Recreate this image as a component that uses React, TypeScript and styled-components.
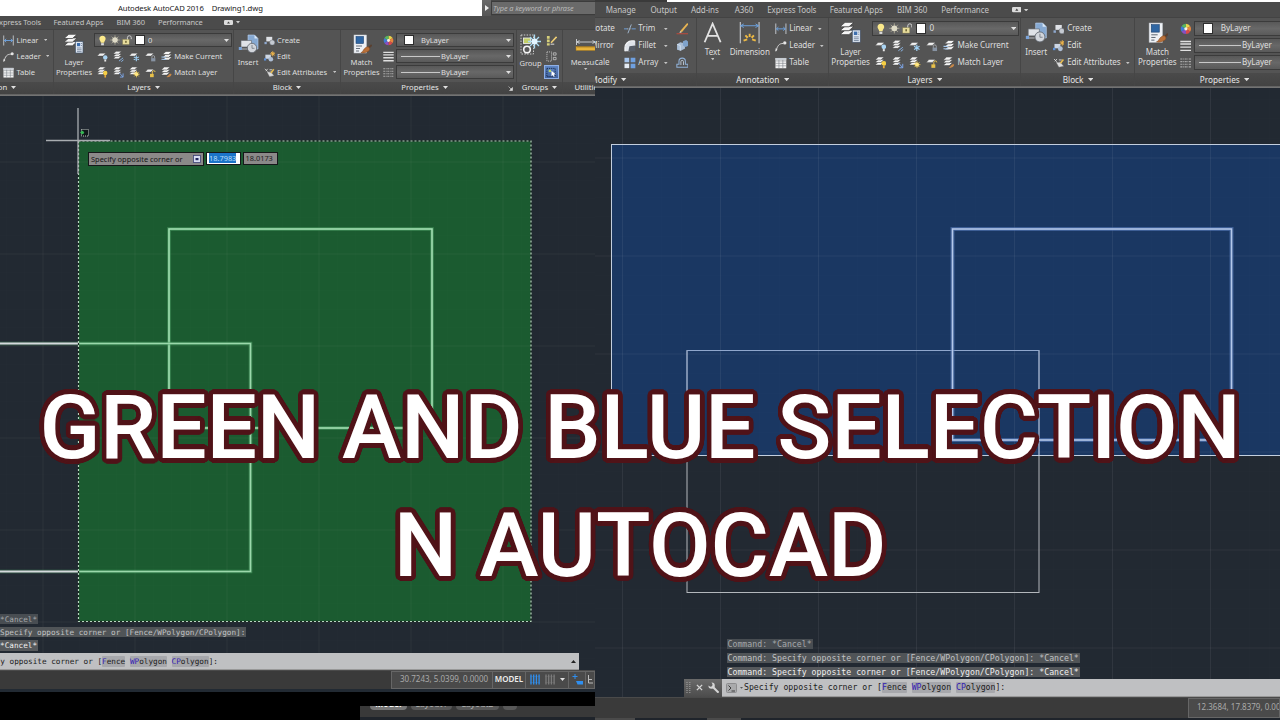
import React from 'react';
import styled, { createGlobalStyle } from 'styled-components';

const UI = '"Noto Sans", "Open Sans", sans-serif';
const MONO = '"DejaVu Sans Mono", "Liberation Mono", monospace';

const GlobalStyle = createGlobalStyle`
  *, *::before, *::after { box-sizing: border-box; }
  html, body { margin: 0; padding: 0; background: #000; }
  body { width: 1280px; height: 720px; overflow: hidden; font-family: ${UI}; }
  svg { display: block; flex: none; }
`;

/* ---------- page frame ---------- */

const Screen = styled.main`
  position: relative;
  display: grid;
  grid-template-columns: 595px 685px;
  width: 1280px;
  height: 720px;
  overflow: hidden;
  background: #000;
`;

const Column = styled.section`
  display: flex;
  flex-direction: column;
  min-width: 0;
  height: 720px;
  overflow: hidden;
`;

const Headline = styled.h1`
  position: absolute;
  top: 369px;
  left: 0;
  width: 1280px;
  margin: 0;
  text-align: center;
  font: 500 89.5px/118px Roboto, sans-serif;
  color: #fff;
  white-space: nowrap;
  text-shadow: ${Array.from({ length: 32 }, (_, i) => {
    const a = (i / 32) * Math.PI * 2;
    return `${(Math.cos(a) * 4.6).toFixed(2)}px ${(Math.sin(a) * 4.6).toFixed(2)}px 0.6px #501318`;
  }).join(', ')};
`;

const HeadlineRow = styled.span<{ $track: number }>`
  display: block;
  letter-spacing: ${(p) => p.$track}px;
`;

/* ---------- title bar and tabs ---------- */

const TitleBar = styled.header`
  display: flex;
  flex: none;
  height: 16px;
  background: #fff;
`;

const TitleText = styled.div`
  display: flex;
  flex: 1;
  align-items: center;
  gap: 8px;
  padding-left: 118px;
  font-size: 7.7px;
  line-height: 15px;
  color: #222;
  letter-spacing: -0.11px;
  white-space: nowrap;
`;

const SearchArrow = styled.div`
  display: flex;
  align-items: center;
  justify-content: center;
  width: 9px;
  background: linear-gradient(#6b6b6b, #555);
`;

const SearchField = styled.div`
  width: 104px;
  margin: 1px 0 1px 0;
  padding-left: 1px;
  border: 1px solid #3c3c3c;
  border-right: 0;
  background: #6a6a6a;
  font: italic 7.4px/12px ${UI};
  letter-spacing: -0.12px;
  color: #b9b9b9;
  white-space: nowrap;
`;

const SearchWrap = styled.div`
  display: flex;
  background: #484848;
`;

const TopSliver = styled.div`
  flex: none;
  height: 3px;
  background: linear-gradient(90deg, #3a3a3a 72px, #fff 72px) 0 0 / 100% 2px no-repeat #4b4b4b;
`;

const RibbonArea = styled.div<{ $zoom: number; $h: number }>`
  zoom: ${(p) => p.$zoom};
  flex: none;
  height: ${(p) => p.$h}px;
  background: #4a4a4a;
  overflow: hidden;
`;

const Tabs = styled.nav<{ $start: number }>`
  display: flex;
  align-items: center;
  height: 14px;
  padding-left: ${(p) => Math.max(p.$start, 0)}px;
  margin-left: ${(p) => Math.min(p.$start, 0)}px;
  background: #4b4b4b;
  border-bottom: 1px solid #434343;
`;

const Tab = styled.span<{ $w: number }>`
  flex: none;
  width: ${(p) => p.$w}px;
  font-size: 7.5px;
  line-height: 13px;
  color: #c6c6c6;
  letter-spacing: -0.1px;
  white-space: nowrap;
`;

const TabToggle = styled.span`
  display: flex;
  align-items: center;
  gap: 3px;
  margin-left: 7px;
`;

/* ---------- ribbon ---------- */

const Panels = styled.div<{ $start: number }>`
  display: flex;
  height: 64px;
  margin-left: ${(p) => p.$start}px;
`;

const Panel = styled.section<{ $w: number }>`
  display: flex;
  flex: none;
  flex-direction: column;
  width: ${(p) => p.$w}px;
  border-left: 1px solid #464646;
  box-shadow: inset 1px 0 0 #585858;
`;

const PanelBody = styled.div<{ $pad?: number; $end?: boolean }>`
  display: flex;
  height: 51.5px;
  padding-left: ${(p) => p.$pad ?? 1}px;
  justify-content: ${(p) => (p.$end ? 'flex-end' : 'flex-start')};
  background: #545454;
`;

const PanelFoot = styled.footer<{ $corner?: boolean }>`
  position: relative;
  display: flex;
  height: 12.5px;
  align-items: center;
  justify-content: center;
  gap: 4px;
  padding-right: ${(p) => (p.$corner ? 8 : 0)}px;
  background: linear-gradient(#4a4a4a, #434343);
  font-size: 7.7px;
  line-height: 11px;
  color: #e6e6e6;
  white-space: nowrap;
`;

const CornerMark = styled.span`
  position: absolute;
  right: 3px;
  bottom: 3px;
`;

const RibbonEdge = styled.div`
  height: 2px;
  background: linear-gradient(#5c5c5c, #7a7a7a);
`;

const BigButton = styled.div<{ $w: number }>`
  display: flex;
  flex: none;
  flex-direction: column;
  align-items: center;
  width: ${(p) => p.$w}px;
  padding-top: 4px;
`;

const BigLabel = styled.span`
  margin-top: 3px;
  font-size: 7.6px;
  line-height: 10px;
  color: #dedede;
  letter-spacing: -0.08px;
  text-align: center;
  white-space: pre;
`;

const BigCaret = styled.span`
  margin-top: 1px;
`;

const Stack = styled.div<{ $w?: number }>`
  display: flex;
  flex: none;
  flex-direction: column;
  width: ${(p) => (p.$w ? `${p.$w}px` : 'auto')};
  padding-top: 2px;
`;

const Row = styled.div<{ $indent?: number }>`
  display: flex;
  height: 16px;
  align-items: center;
  padding-left: ${(p) => p.$indent ?? 0}px;
`;

const Cell = styled.span<{ $w: number; $active?: boolean }>`
  display: flex;
  flex: none;
  width: ${(p) => p.$w}px;
  height: 14px;
  align-items: center;
  justify-content: center;
  background: ${(p) => (p.$active ? 'linear-gradient(#5f86c4, #41639f)' : 'none')};
  border: ${(p) => (p.$active ? '1px solid #8fb0e6' : '0')};
`;

const Label = styled.span<{ $w?: number }>`
  flex: none;
  width: ${(p) => (p.$w ? `${p.$w}px` : 'auto')};
  font-size: 7.6px;
  line-height: 12px;
  color: #dedede;
  letter-spacing: -0.06px;
  white-space: nowrap;
`;

const Combo = styled.div<{ $w: number }>`
  display: flex;
  align-items: center;
  width: ${(p) => p.$w}px;
  height: 14.5px;
  padding: 0 2px 0 2px;
  border: 1px solid #3b3b3b;
  background: linear-gradient(#585858, #686868 50%, #5a5a5a);
`;

const ComboEnd = styled.span`
  margin-left: auto;
`;

const Swatch = styled.span<{ $l: number; $r: number }>`
  width: 10px;
  height: 10px;
  margin: 0 ${(p) => p.$r}px 0 ${(p) => p.$l}px;
  background: #fff;
  border: 0.5px solid #2e2e2e;
`;

const LineSample = styled.span`
  width: 39px;
  height: 1px;
  margin: 0 1px 0 2px;
  background: #c9c9c9;
`;

/* ---------- icons ---------- */

const Caret = ({ w = 5, color = '#e0e0e0', up = false }: { w?: number; color?: string; up?: boolean }) => (
  <svg width={w} height={w * 0.6} viewBox="0 0 10 6">
    <path d={up ? 'M0 6h10L5 0z' : 'M0 0h10L5 6z'} fill={color} />
  </svg>
);

const sheets = (x: number, y: number, s = 1) => (
  <g transform={`translate(${x} ${y}) scale(${s})`}>
    {[7, 3.5, 0].map((d) => (
      <path key={d} d={`M4.500 ${d}h8l-4.500 4h-8z`} fill="#f5f5f5" stroke="#3d3d3d" strokeWidth=".7" />
    ))}
  </g>
);

const LayerPropsIcon = () => (
  <svg width="20" height="20" viewBox="0 0 20 20">
    {sheets(0, 0.3, 1.05)}
    <rect x="11.5" y="7.5" width="7.500" height="11.500" fill="#dfe7f2" stroke="#3f5068" strokeWidth=".6" />
    <rect x="13" y="9" width="3.200" height="3.200" fill="#3e6fae" />
    <path d="M13 14h4.600M13 15.700h4.600M13 17.400h4.600M17 9.500h1M17 11.500h1" stroke="#5b6e88" strokeWidth=".7" />
  </svg>
);

const InsertIcon = () => (
  <svg width="21" height="20" viewBox="0 0 21 20">
    <path d="M10 1h6.500L20 4.500V15H10z" fill="#86a9d2" stroke="#b9d2ee" strokeWidth=".6" />
    <path d="M16.500 1v3.500H20z" fill="#d9e8f8" />
    <path d="M3 6.500h10.500v6.500H3z" fill="#dfe2e7" stroke="#60656d" strokeWidth=".6" />
    <circle cx="14" cy="14" r="4.700" fill="#d2d6dc" stroke="#5f656d" strokeWidth=".8" />
    <path d="M14 11v3.300h2.500" stroke="#70767f" strokeWidth=".8" fill="none" />
    <path d="M3 13v2h6" stroke="#c9ced6" strokeWidth=".8" fill="none" />
    <rect x=".8" y="13" width="3" height="3" fill="#7ba4da" />
  </svg>
);

const MatchIcon = () => (
  <svg width="20" height="20" viewBox="0 0 20 20">
    <rect x="2" y="1" width="12.500" height="18" fill="#eef1f5" stroke="#c5cad1" strokeWidth=".5" />
    <rect x="4" y="2.500" width="7.500" height="7" fill="#2f66a3" stroke="#1d4472" strokeWidth=".6" />
    <path d="M4 12h6M4 14.500h4M4 17h3" stroke="#57616e" strokeWidth=".9" />
    <path d="M19.700 11l-3.700 3.500" stroke="#5a4030" strokeWidth="1.900" />
    <path d="M17 13.300c1.300 1.400.8 3.200-.9 4.100-2 1.100-4.900 2.100-7.200 1.200 1.900-.4 2-2.200 3.300-3.600 1.300-1.500 3.500-2.900 4.800-1.700z" fill="#b8703a" stroke="#7c451c" strokeWidth=".5" />
  </svg>
);

const GroupIcon = () => (
  <svg width="21" height="21" viewBox="0 0 21 21">
    <rect x="1" y="1" width="12.500" height="19" fill="none" stroke="#cfcfcf" strokeWidth="1" strokeDasharray="1.500 1.300" />
    <rect x="3.500" y="4" width="7" height="5.500" fill="#c3cf68" stroke="#f2f2f2" strokeWidth=".8" />
    <circle cx="7" cy="15.500" r="3.300" fill="#5a5a5a" stroke="#f5f5f5" strokeWidth="1.600" />
    <path d="M14.500.5v14M8 7.500h13M10 3l9 9M19 3l-9 9" stroke="#a9dcf5" strokeWidth="1.300" />
    <circle cx="14.500" cy="7.500" r="3" fill="#e4f5ff" />
  </svg>
);

const MeasureIcon = () => (
  <svg width="22" height="20" viewBox="0 0 22 20">
    <path d="M1.500 5v6M20.500 5v6M2 8h18M4.500 6.500L2 8l2.500 1.500M17.500 6.500L20 8l-2.500 1.500" stroke="#dfe3e8" strokeWidth=".8" fill="none" />
    <rect x="1" y="12.500" width="20" height="4" fill="#e9b43c" stroke="#a1741a" strokeWidth=".5" />
    <path d="M3 12.500v1.600M5 12.500v1.600M7 12.500v1.600M9 12.500v1.600M11 12.500v1.600M13 12.500v1.600M15 12.500v1.600M17 12.500v1.600M19 12.500v1.600" stroke="#7c5608" strokeWidth=".5" />
  </svg>
);

const LetterAIcon = () => (
  <svg width="18" height="20" viewBox="0 0 18 20">
    <path d="M1.500 19L9 1.600 16.500 19M4.200 13h9.600" stroke="#e3e3e3" strokeWidth="1.700" fill="none" />
  </svg>
);

const DimensionIcon = () => (
  <svg width="20" height="20" viewBox="0 0 20 20">
    <path d="M1.200 0v20M18.800 0v20" stroke="#d9dde2" strokeWidth=".9" />
    <path d="M1.500 3.500h17M4.500 1.800L1.600 3.500l2.900 1.700M15.500 1.800l2.900 1.700-2.900 1.700" stroke="#6da3e0" strokeWidth=".9" fill="none" />
    <path d="M4.300 17.500l3.400-1.200M15.700 17.500l-3.400-1.200M6 12.500l2.200 2.300M14 12.500l-2.200 2.300M10 11v3" stroke="#edb944" strokeWidth="1.800" />
  </svg>
);

type IconName =
  | 'linear' | 'leader' | 'table' | 'bulb' | 'sun' | 'lock'
  | 'lyOff' | 'lyIso' | 'lyFreeze' | 'lyLock' | 'lyCurrent'
  | 'lyOn' | 'lyUniso' | 'lyThaw' | 'lyUnlock' | 'lyMatch'
  | 'create' | 'edit' | 'attrs' | 'wheel' | 'weights' | 'types'
  | 'gEdit' | 'gBox' | 'gPick' | 'trim' | 'fillet' | 'array'
  | 'pencil' | 'explode' | 'offset';

const mini = (
  <path d="M3 2.500h6.500L6.500 5.500H.3z" fill="#f0f0f0" stroke="#444" strokeWidth=".4" />
);

const ART: Record<IconName, React.ReactNode> = {
  linear: (
    <>
      <path d="M.8.500v11M11.200.500v11" stroke="#cdd2d8" strokeWidth=".9" />
      <path d="M1.300 6h9.400M3.500 4.200L1.500 6l2 1.800M8.500 4.200l2 1.800-2 1.800" stroke="#6da3e0" strokeWidth="1" fill="none" />
    </>
  ),
  leader: (
    <>
      <path d="M1 11.500C2.500 6 4 3.500 8.500 3.500" stroke="#d6d6d6" strokeWidth="1" fill="none" />
      <path d="M.3 11.800l.4-3.300 1.900 1.200z" fill="#e6e6e6" />
      <circle cx="10" cy="3" r="1.700" fill="#e6e6e6" />
    </>
  ),
  table: (
    <>
      <rect x=".5" y="1" width="11" height="10.500" fill="#f4f4f4" />
      <path d="M.5 4h11M.5 6.500h11M.5 9h11M4 1.500v10M8 1.500v10" stroke="#7b8087" strokeWidth=".6" />
      <path d="M.5 1h11v2H.5z" fill="#c7ccd3" />
    </>
  ),
  bulb: (
    <>
      <path d="M6 .8c2.300 0 3.400 1.500 3.400 3.200 0 1.600-1.500 2.600-1.700 4.400H4.300C4.100 6.600 2.600 5.600 2.600 4 2.600 2.300 3.700.8 6 .8z" fill="#fbe98b" />
      <path d="M4.500 8.900h3v2.300h-3z" fill="#dadada" />
    </>
  ),
  sun: (
    <>
      <path d="M6 .3v11.400M.3 6h11.400M2 2l8 8M10 2l-8 8" stroke="#b7b29a" strokeWidth=".9" />
      <circle cx="6" cy="6" r="3.300" fill="#dedac6" />
    </>
  ),
  lock: (
    <>
      <path d="M6.500 6V3.200a2.300 2.300 0 0 1 4.600 0V5" stroke="#d6d6d6" strokeWidth="1.100" fill="none" />
      <rect x=".8" y="5.300" width="7.800" height="6" fill="#e7dc9c" stroke="#8b8044" strokeWidth=".4" />
      <rect x="3.800" y="7" width="1.800" height="2.400" fill="#6e6535" />
    </>
  ),
  lyOff: (
    <>
      {mini}
      <circle cx="9" cy="7" r="2.400" fill="#a9d3f2" />
      <path d="M8 9.300h2v2.200H8z" fill="#e8e8e8" />
    </>
  ),
  lyIso: (
    <>
      {sheets(0, 0.300, 0.75)}
      <path d="M6.500 11L11 7.500M9 11.600l2.500-2" stroke="#8db8e8" strokeWidth="1" />
    </>
  ),
  lyFreeze: (
    <>
      {mini}
      <path d="M8 4.800v6.400M5.200 6.400l5.600 3.200M10.800 6.400L5.200 9.600" stroke="#9fd0f4" strokeWidth="1.200" />
    </>
  ),
  lyLock: (
    <>
      {mini}
      <path d="M7.500 8V6.500a1.500 1.500 0 0 1 3 0V8" stroke="#b5b9bf" strokeWidth=".8" fill="none" />
      <rect x="6.700" y="7.800" width="4.600" height="3.500" fill="#8793a3" />
    </>
  ),
  lyCurrent: (
    <>
      {sheets(1.500, 0.500, 0.85)}
      <path d="M.5 6.500l5 .2M.5 9l5 .2" stroke="#a7c9ee" strokeWidth="1.100" />
    </>
  ),
  lyOn: (
    <>
      {sheets(0, 0, 0.75)}
      <circle cx="9" cy="6.500" r="2.400" fill="#f6cf45" />
      <path d="M8.100 8.800h1.800v2.700H8.100z" fill="#e8a93a" />
    </>
  ),
  lyUniso: (
    <>
      {sheets(0, 0, 0.75)}
      <path d="M7 6.500l4 4.500M11 7v4H7.500" stroke="#7ea6e8" strokeWidth="1" fill="none" />
    </>
  ),
  lyThaw: (
    <>
      {sheets(0, 0, 0.75)}
      <path d="M8.200 4.300v7M4.700 7.800h7M5.700 5.300l5 5M10.700 5.300l-5 5" stroke="#efc84a" strokeWidth=".9" />
      <circle cx="8.200" cy="7.800" r="2" fill="#ffe680" />
    </>
  ),
  lyUnlock: (
    <>
      {mini}
      <path d="M8 8V5.500a1.500 1.500 0 0 1 3 0" stroke="#e9c14a" strokeWidth="1" fill="none" />
      <rect x="5.500" y="7.500" width="4" height="3.600" fill="#e9c14a" />
    </>
  ),
  lyMatch: (
    <>
      {sheets(0, 0, 0.8)}
      <path d="M11.500 8c-.5 2.500-3 3.500-6 3 1.500-.4 1.700-1.400 2.700-2.400 1-1 2.400-1.600 3.300-.6z" fill="#c98848" />
    </>
  ),
  create: (
    <>
      <path d="M2.500 2h6.500v5H2.500z" fill="#dfe2e7" />
      <circle cx="9" cy="8.200" r="2.800" fill="#c5cad2" stroke="#60656d" strokeWidth=".5" />
      <path d="M.5 7.500h2.500V10H.5z" fill="#8fa9cf" />
    </>
  ),
  edit: (
    <>
      <path d="M1.500 4h6v4.500h-6z" fill="#ccd6e4" />
      <circle cx="7.500" cy="9" r="2.500" fill="#aebfd6" />
      <path d="M0 8h2.400v2.400H0z" fill="#5c92dd" />
      <path d="M9.500.3v5.400M6.800 3h5.400M7.700 1.100l3.600 3.800M11.300 1.100L7.700 4.900" stroke="#f0b64a" strokeWidth="1" />
    </>
  ),
  attrs: (
    <>
      <path d="M1 2l3 3M4 2L2 4.500M6 3h3M6 5.500h3" stroke="#dedede" strokeWidth=".9" />
      <path d="M3 5l3 5.500 5-1L8 6z" fill="#dcdcdc" stroke="#666" strokeWidth=".4" />
      <path d="M7 6l3-4 1.300 1-3 4z" fill="#e8bc4e" />
    </>
  ),
  wheel: (
    <>
      <path d="M6 6V.8A5.200 5.200 0 0 1 10.500 3.400z" fill="#e8d34a" />
      <path d="M6 6l4.500-2.600a5.200 5.200 0 0 1 0 5.200z" fill="#e8853f" />
      <path d="M6 6l4.500 2.600A5.200 5.200 0 0 1 6 11.200z" fill="#d94a4a" />
      <path d="M6 6v5.200a5.200 5.200 0 0 1-4.500-2.600z" fill="#8a4fc4" />
      <path d="M6 6L1.500 8.600a5.200 5.200 0 0 1 0-5.200z" fill="#3f7bd6" />
      <path d="M6 6L1.500 3.400A5.200 5.200 0 0 1 6 .8z" fill="#58b860" />
      <circle cx="6" cy="6" r="1.600" fill="#f5f0e4" />
    </>
  ),
  weights: <path d="M.3 1.500h11.400M.3 4.200h11.400M.3 7.300h11.400M.3 10.600h11.400" stroke="#e0e0e0" strokeWidth="1.500" />,
  types: <path d="M.3 2h11.400M.3 4.700h11.400M.3 7.400h11.400M.3 10.100h11.400" stroke="#a9a9a9" strokeWidth="1.100" strokeDasharray="2.200 .7 .8 .7" />,
  gEdit: (
    <>
      <path d="M1 1h3v3H1zM1 5h3v3H1zM1 9h3v2.500H1z" fill="#d6d07a" />
      <path d="M5.500 8.500L11.500 2" stroke="#f0cf75" strokeWidth="1.700" />
      <path d="M5 10h4" stroke="#ddd" strokeWidth="1.100" />
    </>
  ),
  gBox: (
    <>
      <rect x="1" y="1" width="5" height="10" fill="none" stroke="#cfcfcf" strokeWidth=".9" strokeDasharray="1.200 1" />
      <path d="M8 2h3v2.500H8zM8 7h3v2.500H8z" fill="none" stroke="#c4c4c4" strokeWidth=".9" />
    </>
  ),
  gPick: (
    <>
      <rect x="1" y="1.500" width="9" height="9" fill="none" stroke="#111d33" strokeWidth=".9" strokeDasharray="1.300 1" />
      <path d="M3 3h2.500v2.500H3z" fill="#b7d66b" />
      <path d="M6 4l4.500 4-2 .3 1 2.200-1 .5-1-2.300L6 10z" fill="#fff" />
    </>
  ),
  trim: (
    <>
      <path d="M0 6h3.500M8 6h4" stroke="#6e9fd8" strokeWidth="1" />
      <path d="M3 6h5" stroke="#bfc4ca" strokeWidth=".8" strokeDasharray="1 .7" />
      <path d="M7.500 1.500l-3.500 9" stroke="#9fb4cc" strokeWidth="1" />
    </>
  ),
  fillet: (
    <>
      <path d="M1 11.500V8a7 7 0 0 1 7-7h3.500v4.500L6 11.500z" fill="#dfe3e9" />
      <path d="M1 11.500V8a7 7 0 0 1 7-7h3" stroke="#f2f4f6" strokeWidth="1.300" fill="none" />
      <path d="M4.500 11.500l1-5 6-1v6z" fill="#565d67" />
    </>
  ),
  array: (
    <>
      <path d="M.5.800h4.800v4.600H.5z" fill="#a7c6ee" />
      <path d="M6.800.800h4.800v4.600H6.800zM6.800 6.800h4.800v4.600H6.800z" fill="#6fa0e0" />
      <path d="M.5 6.800h4.800v4.600H.5z" fill="#e3eaf3" />
    </>
  ),
  pencil: (
    <>
      <path d="M4 8.500L10.500 1l1.200 1L5.500 9.500z" fill="#e8b452" />
      <path d="M4 8.500l1.500 1-2.300.8z" fill="#f0e2c8" />
      <path d="M.5 11h11" stroke="#b84a3c" strokeWidth="1" />
    </>
  ),
  explode: (
    <>
      <path d="M1 5l3-2 4 1 .5 5-4 2L1 10z" fill="#a9bed6" />
      <path d="M6.500 2l3-1 2 1.500v4L9 7.500 6.500 6z" fill="#7fa3cc" />
      <path d="M1 5l3 1v5" stroke="#dde8f4" strokeWidth=".7" fill="none" />
    </>
  ),
  offset: (
    <>
      <path d="M.8 10.500h10.400V7.800H8.800V5a3 3 0 0 0-6 0v2.800h-2z" fill="none" stroke="#8fb0d6" strokeWidth="1" />
      <path d="M4.600 8.500V5.300a1.200 1.200 0 0 1 2.400 0v3.200" stroke="#c9d6e4" strokeWidth=".8" fill="none" />
    </>
  ),
};

const Glyph = ({ name, size = 11 }: { name: IconName; size?: number }) => (
  <svg width={size} height={size} viewBox="0 0 12 12">
    {ART[name]}
  </svg>
);

/* ---------- ribbon panels ---------- */

const Foot = ({ children, corner }: { children: string; corner?: boolean }) => (
  <PanelFoot $corner={corner}>
    {children}
    <Caret w={5} />
    {corner && (
      <CornerMark>
        <svg width="5" height="5" viewBox="0 0 5 5">
          <path d="M.5.5l2.500 2.500M4.500 1.500v3h-3z" fill="#ddd" stroke="#ddd" strokeWidth=".6" />
        </svg>
      </CornerMark>
    )}
  </PanelFoot>
);

const Tool = ({ icon, text, w, cell = 16, drop }: { icon?: IconName; text: string; w?: number; cell?: number; drop?: boolean }) => (
  <Row>
    {icon && (
      <Cell $w={cell}>
        <Glyph name={icon} />
      </Cell>
    )}
    <Label $w={w}>{text}</Label>
    {drop && <Caret w={3.4} color="#c4c4c4" />}
  </Row>
);

const ModifyPanel = () => (
  <Panel $w={165}>
    <PanelBody $end>
      <Stack $w={29}>
        <Tool text="Rotate" />
        <Tool text="Mirror" />
        <Tool text="Scale" />
      </Stack>
      <Stack $w={50}>
        <Tool icon="trim" text="Trim" w={24} drop />
        <Tool icon="fillet" text="Fillet" w={24} drop />
        <Tool icon="array" text="Array" w={24} drop />
      </Stack>
      <Stack $w={20}>
        {(['pencil', 'explode', 'offset'] as IconName[]).map((n) => (
          <Row key={n}>
            <Cell $w={14}>
              <Glyph name={n} size={12} />
            </Cell>
          </Row>
        ))}
      </Stack>
    </PanelBody>
    <Foot>Modify</Foot>
  </Panel>
);

const AnnotationPanel = () => (
  <Panel $w={124}>
    <PanelBody $pad={0.5}>
      <BigButton $w={28}>
        <LetterAIcon />
        <BigLabel>Text</BigLabel>
        <BigCaret>
          <Caret w={3.4} color="#c4c4c4" />
        </BigCaret>
      </BigButton>
      <BigButton $w={42}>
        <DimensionIcon />
        <BigLabel>Dimension</BigLabel>
      </BigButton>
      <Stack>
        <Tool icon="linear" text="Linear" w={27} drop />
        <Tool icon="leader" text="Leader" w={29} drop />
        <Tool icon="table" text="Table" />
      </Stack>
    </PanelBody>
    <Foot>Annotation</Foot>
  </Panel>
);

const LAYER_TOOLS: IconName[][] = [
  ['lyOff', 'lyIso', 'lyFreeze', 'lyLock', 'lyCurrent'],
  ['lyOn', 'lyUniso', 'lyThaw', 'lyUnlock', 'lyMatch'],
];

const LayersPanel = () => (
  <Panel $w={180}>
    <PanelBody>
      <BigButton $w={38}>
        <LayerPropsIcon />
        <BigLabel>{'Layer\nProperties'}</BigLabel>
      </BigButton>
      <Stack $w={139}>
        <Row $indent={1}>
          <Combo $w={138}>
            <Cell $w={11}><Glyph name="bulb" size={11} /></Cell>
            <Cell $w={14}><Glyph name="sun" size={10} /></Cell>
            <Cell $w={10}><Glyph name="lock" size={10} /></Cell>
            <Swatch $l={3} $r={3} />
            <Label>0</Label>
            <ComboEnd><Caret w={5} /></ComboEnd>
          </Combo>
        </Row>
        {LAYER_TOOLS.map((set, i) => (
          <Row $indent={1.2} key={i}>
            {set.map((n) => (
              <Cell $w={16} key={n}><Glyph name={n} size={11} /></Cell>
            ))}
            <Label>{i ? 'Match Layer' : 'Make Current'}</Label>
          </Row>
        ))}
      </Stack>
    </PanelBody>
    <Foot>Layers</Foot>
  </Panel>
);

const BlockPanel = () => (
  <Panel $w={107}>
    <PanelBody>
      <BigButton $w={26}>
        <InsertIcon />
        <BigLabel>Insert</BigLabel>
      </BigButton>
      <Stack>
        <Tool icon="create" text="Create" />
        <Tool icon="edit" text="Edit" />
        <Tool icon="attrs" text="Edit Attributes" w={55.5} drop />
      </Stack>
    </PanelBody>
    <Foot>Block</Foot>
  </Panel>
);

const PropertiesPanel = () => (
  <Panel $w={176}>
    <PanelBody>
      <BigButton $w={39}>
        <MatchIcon />
        <BigLabel>{'Match\nProperties'}</BigLabel>
      </BigButton>
      <Stack $w={15}>
        {(['wheel', 'weights', 'types'] as IconName[]).map((n) => (
          <Row key={n}><Cell $w={14}><Glyph name={n} size={11} /></Cell></Row>
        ))}
      </Stack>
      <Stack>
        <Row>
          <Combo $w={118}>
            <Swatch $l={5} $r={7} />
            <Label>ByLayer</Label>
            <ComboEnd><Caret w={5} /></ComboEnd>
          </Combo>
        </Row>
        {[0, 1].map((n) => (
          <Row key={n}>
            <Combo $w={118}>
              <LineSample />
              <Label>ByLayer</Label>
              <ComboEnd><Caret w={5} /></ComboEnd>
            </Combo>
          </Row>
        ))}
      </Stack>
    </PanelBody>
    <Foot corner>Properties</Foot>
  </Panel>
);

const GroupsPanel = () => (
  <Panel $w={46}>
    <PanelBody $pad={0}>
      <BigButton $w={27}>
        <GroupIcon />
        <BigLabel>Group</BigLabel>
      </BigButton>
      <Stack>
        <Row><Cell $w={15}><Glyph name="gEdit" /></Cell></Row>
        <Row><Cell $w={15}><Glyph name="gBox" /></Cell></Row>
        <Row><Cell $w={15} $active><Glyph name="gPick" /></Cell></Row>
      </Stack>
    </PanelBody>
    <Foot>Groups</Foot>
  </Panel>
);

const UtilitiesPanel = () => (
  <Panel $w={60}>
    <PanelBody $pad={6}>
      <BigButton $w={34}>
        <MeasureIcon />
        <BigLabel>Measure</BigLabel>
        <BigCaret><Caret w={3.4} color="#c4c4c4" /></BigCaret>
      </BigButton>
    </PanelBody>
    <Foot>Utilities</Foot>
  </Panel>
);

type TabDef = [string, number];

const LATE_TABS: TabDef[] = [
  ['Express Tools', 58.5],
  ['Featured Apps', 63],
  ['BIM 360', 41.5],
  ['Performance', 59],
];

const EARLY_TABS: TabDef[] = [
  ['Manage', 42],
  ['Output', 38],
  ['Add-ins', 41],
  ['A360', 30.5],
];

const TabStrip = ({ tabs, start }: { tabs: TabDef[]; start: number }) => (
  <Tabs $start={start}>
    {tabs.map(([t, w]) => (
      <Tab key={t} $w={w}>{t}</Tab>
    ))}
    <TabToggle>
      <svg width="9" height="5" viewBox="0 0 9 5">
        <rect width="9" height="5" rx="1.200" fill="#dcdcdc" />
        <path d="M3 3.500h3L4.500 1.500z" fill="#444" />
      </svg>
      <Caret w={4} color="#cfcfcf" />
    </TabToggle>
  </Tabs>
);

/* ---------- drawing area ---------- */

const Canvas = styled.div<{ $h: number }>`
  position: relative;
  flex: none;
  height: ${(p) => p.$h}px;
  background: #222932;
  overflow: hidden;
`;

const Drawing = styled.svg`
  position: absolute;
  inset: 0;
`;

const range = (from: number, to: number, step: number) => {
  const out: number[] = [];
  for (let v = from; v < to; v += step) out.push(v);
  return out;
};

const Grid = ({ x0, y0, step, w, h, strength }: { x0: number; y0: number; step: number; w: number; h: number; strength: number }) => (
  <g stroke="#ffffff">
    <path
      d={range(x0 - step, w, step / 5).map((x) => `M${x} 0V${h}`).join('') + range(y0 - step, h, step / 5).map((y) => `M0 ${y}H${w}`).join('')}
      strokeOpacity=".01"
    />
    <path
      d={range(x0, w, step).map((x) => `M${x} 0V${h}`).join('') + range(y0, h, step).map((y) => `M0 ${y}H${w}`).join('')}
      strokeOpacity={strength}
    />
  </g>
);

const LeftDrawing = () => (
  <Drawing width="595" height="574" viewBox="0 96 595 574">
    <rect x="78" y="141" width="453" height="481" fill="#1b5b30" />
    <g transform="translate(0 96)">
      <Grid x0={43} y0={66} step={92} w={595} h={600} strength={0.05} />
    </g>
    <rect x="169" y="229" width="263" height="199" fill="none" stroke="#4f9f68" strokeWidth="3.600" strokeOpacity=".6" />
    <rect x="169" y="229" width="263" height="199" fill="none" stroke="#a3e0b2" strokeWidth="1.600" />
    <path d="M-4 343.500H250.500V571.500H-4" fill="none" stroke="#4f9f68" strokeWidth="3.600" strokeOpacity=".6" />
    <path d="M78 343.500H250.500V571.500H78" fill="none" stroke="#9bd8ab" strokeWidth="1.600" />
    <path d="M0 343.500H78M0 571.500H78" stroke="#7f858b" strokeWidth="3.200" strokeOpacity=".6" />
    <path d="M0 343.500H78M0 571.500H78" stroke="#d5d9dd" strokeWidth="1.600" />
    <rect x="78.500" y="141" width="452.500" height="480.500" fill="none" stroke="#1a2a22" strokeWidth="1.200" />
    <rect x="78.500" y="141" width="452.500" height="480.500" fill="none" stroke="#b9d6c1" strokeWidth="1.200" strokeDasharray="2 2" />
    <path d="M78 108V174M46 140.500H110" stroke="#a9adb1" strokeWidth="1.300" />
    <rect x="81.500" y="129.500" width="7" height="6.500" fill="#10181a" stroke="#cfd6d0" strokeWidth=".9" strokeDasharray="1 1" />
    <path d="M80 132.500l3-2v4z" fill="#3bc95a" />
    <circle cx="82.500" cy="132.500" r="1.600" fill="#35b653" />
  </Drawing>
);

const RightDrawing = () => (
  <Drawing width="685" height="609" viewBox="595 88 685 609">
    <rect x="611" y="144" width="680" height="311.500" fill="#1a3762" />
    <g transform="translate(595 88)">
      <Grid x0={27.5} y0={70} step={98} w={685} h={609} strength={0.055} />
    </g>
    <rect x="687" y="350.500" width="352" height="242" fill="none" stroke="#b3b7bc" />
    <path d="M687 455V350.500H1039V455" fill="none" stroke="#8fa6cc" />
    <rect x="611.500" y="144.500" width="680" height="311" fill="none" stroke="#c3cede" />
    <rect x="952.500" y="229" width="279" height="211" fill="none" stroke="#5578b8" strokeWidth="4" strokeOpacity=".6" />
    <rect x="952.500" y="229" width="279" height="211" fill="none" stroke="#b4c8ea" strokeWidth="1.600" />
  </Drawing>
);

const DynamicInput = styled.div`
  position: absolute;
  top: 55.5px;
  left: 88px;
  display: flex;
  gap: 2px;
  font-size: 7.4px;
  line-height: 12px;
  white-space: nowrap;
`;

const PromptBox = styled.div`
  display: flex;
  align-items: center;
  justify-content: space-between;
  width: 116px;
  height: 14.5px;
  padding: 0 2px 0 2px;
  border: 1px solid #16181a;
  background: #8b8989;
  color: #161616;
  letter-spacing: 0.02px;
`;

const ValueBox = styled.div<{ $live?: boolean }>`
  display: flex;
  align-items: center;
  width: ${(p) => (p.$live ? 34.5 : 35)}px;
  height: 13px;
  padding-left: 2px;
  border: 1px solid #16181a;
  background: ${(p) => (p.$live ? '#fff' : '#8b8989')};
  color: #222;
`;

const Picked = styled.span`
  background: #1b74c8;
  color: #b9dcf8;
  line-height: 10px;
`;

/* ---------- command line ---------- */

const History = styled.div<{ $left: number; $bottom: number; $size: number; $gap: number }>`
  position: absolute;
  left: ${(p) => p.$left}px;
  bottom: ${(p) => p.$bottom}px;
  display: flex;
  flex-direction: column;
  align-items: flex-start;
  gap: ${(p) => p.$gap}px;
  font: ${(p) => p.$size}px/11px ${MONO};
  white-space: pre;
`;

const HistoryLine = styled.span<{ $tone: string; $bg: string }>`
  height: 10.5px;
  padding: 0 1px;
  background: ${(p) => p.$bg};
  color: ${(p) => p.$tone};
`;

const CommandBar = styled.div<{ $left: number; $w: number; $h: number; $bottom: number }>`
  position: absolute;
  left: ${(p) => p.$left}px;
  bottom: ${(p) => p.$bottom}px;
  display: flex;
  width: ${(p) => p.$w}px;
  height: ${(p) => p.$h}px;
  overflow: hidden;
`;

const CommandGrip = styled.div`
  display: flex;
  flex: none;
  align-items: center;
  gap: 5px;
  width: 38px;
  padding-left: 2px;
  background: linear-gradient(#6a6a6a, #4c4c4c);
`;

const CommandField = styled.div<{ $size: number; $pad: number }>`
  display: flex;
  flex: 1;
  align-items: center;
  padding-top: 1px;
  padding-right: 3px;
  padding-left: ${(p) => Math.max(0, p.$pad)}px;
  background: #bfc0c2;
  border-bottom: 1px solid #989898;
  font: ${(p) => p.$size}px/11px ${MONO};
  color: #1c1c1c;
  white-space: pre;
  & > :first-child { margin-left: ${(p) => Math.min(0, p.$pad)}px; }
`;

const Option = styled.span`
  background: #a6a7ab;
  border-radius: 1px;
  b { font-weight: 400; color: #3421b4; }
`;

const PromptGlyph = styled.span`
  display: flex;
  align-items: center;
  gap: 3px;
  margin-right: 1px;
`;

const BarEnd = styled.span`
  margin-left: auto;
`;

const Prompt = () => (
  <>
    <span>Specify opposite corner or [</span>
    <Option><b>F</b>ence</Option>
    <span> </span>
    <Option><b>WP</b>olygon</Option>
    <span> </span>
    <Option><b>CP</b>olygon</Option>
    <span>]:</span>
  </>
);

/* ---------- status bars ---------- */

const StatusBar = styled.footer<{ $h: number }>`
  display: flex;
  flex: none;
  justify-content: flex-end;
  height: ${(p) => p.$h}px;
  background: #3a3a3a;
  border-top: 1px solid #4a4a4a;
`;

const StatusCell = styled.div<{ $w: number; $bold?: boolean; $pad?: number }>`
  display: flex;
  flex: none;
  align-items: center;
  justify-content: ${(p) => (p.$pad ? 'flex-start' : 'center')};
  gap: 5px;
  width: ${(p) => p.$w}px;
  padding-left: ${(p) => p.$pad ?? 0}px;
  padding-bottom: 2px;
  border: 1px solid #666;
  border-left-width: ${(p) => (p.$pad ? 1 : 0)}px;
  background: #4a4a4a;
  font-size: 8px;
  line-height: 14px;
  font-weight: ${(p) => (p.$bold ? 600 : 400)};
  color: ${(p) => (p.$bold ? '#ececec' : '#a9a9a9')};
  white-space: nowrap;
  overflow: hidden;
`;

const CanvasEdge = styled.div<{ $h: number; $seg?: boolean }>`
  flex: none;
  height: ${(p) => p.$h}px;
  background: ${(p) => (p.$seg ? 'linear-gradient(90deg, #4a4a4a 40px, #1f242b 40px, #1f242b 112px, #4a4a4a 112px, #4a4a4a 146px, #1f242b 146px)' : '#222a33')};
`;

const BlackBand = styled.div`
  flex: none;
  height: 14px;
  background: #000;
`;

const LayoutStrip = styled.div`
  display: flex;
  flex: none;
  align-items: flex-start;
  gap: 4px;
  height: 14px;
  margin-left: 360px;
  padding-left: 10px;
  background: linear-gradient(#393939 11.5px, #1f242b 11.5px);
  overflow: hidden;
`;

const LayoutTab = styled.span<{ $w: number; $on?: boolean }>`
  flex: none;
  width: ${(p) => p.$w}px;
  height: 13px;
  margin-top: -9px;
  border-radius: 0 0 4px 4px;
  background: ${(p) => (p.$on ? '#777' : '#585858')};
  color: ${(p) => (p.$on ? '#fff' : '#b5b5b5')};
  font-size: 8.5px;
  font-weight: ${(p) => (p.$on ? 700 : 400)};
  line-height: 13px;
  text-align: center;
`;

const Hatch = ({ color }: { color: string }) => (
  <svg width="10" height="11" viewBox="0 0 10 11">
    <path d="M1 .5v10M3.700.5v10M6.400.5v10M9.100.5v10" stroke={color} strokeWidth="1.300" />
    <path d="M0 2.500h10M0 8.500h10" stroke={color} strokeWidth=".6" opacity=".5" />
  </svg>
);

/* ---------- windows ---------- */

const LeftWindow = () => (
  <Column>
    <TitleBar>
      <TitleText>
        <span>Autodesk AutoCAD 2016</span>
        <span>Drawing1.dwg</span>
      </TitleText>
      <SearchWrap>
        <SearchArrow>
          <svg width="4" height="6" viewBox="0 0 4 6"><path d="M0 0l4 3-4 3z" fill="#eee" /></svg>
        </SearchArrow>
        <SearchField>Type a keyword or phrase</SearchField>
      </SearchWrap>
    </TitleBar>
    <RibbonArea $zoom={1} $h={80}>
      <TabStrip tabs={LATE_TABS} start={-5} />
      <Panels $start={-71}>
        <AnnotationPanel />
        <LayersPanel />
        <BlockPanel />
        <PropertiesPanel />
        <GroupsPanel />
        <UtilitiesPanel />
      </Panels>
      <RibbonEdge />
    </RibbonArea>
    <Canvas $h={574}>
      <LeftDrawing />
      <DynamicInput>
        <PromptBox>
          Specify opposite corner or
          <svg width="8" height="8" viewBox="0 0 8 8">
            <rect x=".5" y=".5" width="7" height="7" fill="#d8dcf2" stroke="#3d4277" strokeWidth=".8" />
            <path d="M2.500 3h3v2.200h-3z" fill="#23285e" />
          </svg>
        </PromptBox>
        <ValueBox $live><Picked>18.7983</Picked></ValueBox>
        <ValueBox>18.0173</ValueBox>
      </DynamicInput>
      <History $left={-1} $bottom={19.5} $size={7.69} $gap={2.7}>
        <HistoryLine $tone="#a5a8ab" $bg="#484d52">*Cancel*</HistoryLine>
        <HistoryLine $tone="#c0c2c4" $bg="#505457">Specify opposite corner or [Fence/WPolygon/CPolygon]:</HistoryLine>
        <HistoryLine $tone="#efefef" $bg="#56595c">*Cancel*</HistoryLine>
      </History>
      <CommandBar $left={0} $w={579} $h={17} $bottom={0}>
        <CommandField $size={7.69} $pad={-27.5}>
          <Prompt />
          <BarEnd><Caret w={5} color="#222" up /></BarEnd>
        </CommandField>
      </CommandBar>
    </Canvas>
    <StatusBar $h={19}>
      <StatusCell $w={102} $pad={8}>30.7243, 5.0399, 0.0000</StatusCell>
      <StatusCell $w={33} $bold>MODEL</StatusCell>
      <StatusCell $w={43}>
        <Hatch color="#2f8ff0" />
        <Hatch color="#7c7c7c" />
        <Caret w={5} />
      </StatusCell>
      <StatusCell $w={17}>
        <svg width="11" height="11" viewBox="0 0 11 11">
          <path d="M3 0v5M.5 2.500h5" stroke="#2f8ff0" strokeWidth="1" />
          <path d="M4 7h7v3.500H5.500z" fill="#2f8ff0" />
        </svg>
      </StatusCell>
      <StatusCell $w={9}>
        <svg width="6" height="9" viewBox="0 0 6 9"><path d="M1.500 0v8H6M1.500 4.500H5" stroke="#bbb" fill="none" /></svg>
      </StatusCell>
    </StatusBar>
    <CanvasEdge $h={3} />
    <BlackBand />
    <LayoutStrip>
      <LayoutTab $w={37} $on>Model</LayoutTab>
      <LayoutTab $w={41}>Layout1</LayoutTab>
      <LayoutTab $w={43}>Layout2</LayoutTab>
      <LayoutTab $w={14}>+</LayoutTab>
    </LayoutStrip>
  </Column>
);

const RightWindow = () => (
  <Column>
    <TopSliver />
    <RibbonArea $zoom={1.067} $h={79.66}>
      <TabStrip tabs={[...EARLY_TABS, ...LATE_TABS]} start={10} />
      <Panels $start={-70.4}>
        <ModifyPanel />
        <AnnotationPanel />
        <LayersPanel />
        <BlockPanel />
        <PropertiesPanel />
      </Panels>
      <RibbonEdge />
    </RibbonArea>
    <Canvas $h={609}>
      <RightDrawing />
      <History $left={131.5} $bottom={19.5} $size={8.22} $gap={3.6}>
        <HistoryLine $tone="#a5a8ab" $bg="#484d52">Command: *Cancel*</HistoryLine>
        <HistoryLine $tone="#c0c2c4" $bg="#505457">Command: Specify opposite corner or [Fence/WPolygon/CPolygon]: *Cancel*</HistoryLine>
        <HistoryLine $tone="#efefef" $bg="#56595c">Command: Specify opposite corner or [Fence/WPolygon/CPolygon]: *Cancel*</HistoryLine>
      </History>
      <CommandBar $left={89} $w={596} $h={18} $bottom={0}>
        <CommandGrip>
          <svg width="5" height="12" viewBox="0 0 5 12">
            <path d="M1 0v12M3.800 0v12" stroke="#9b9b9b" strokeWidth="1.200" strokeDasharray="1 1" />
          </svg>
          <svg width="7" height="7" viewBox="0 0 8 8"><path d="M1 1l6 6M7 1L1 7" stroke="#d5d5d5" strokeWidth="1.600" /></svg>
          <svg width="11" height="11" viewBox="0 0 10 10">
            <path d="M4.500 4.500L9 9" stroke="#d5d5d5" strokeWidth="1.900" strokeLinecap="round" />
            <path d="M3.200.4a2.900 2.900 0 1 1-2.800 2.800l1.700 1.200 1.700-.5.300-1.800z" fill="#d5d5d5" />
          </svg>
        </CommandGrip>
        <CommandField $size={8.2} $pad={4}>
          <PromptGlyph>
            <svg width="11" height="10" viewBox="0 0 11 10">
              <rect x=".5" y=".5" width="10" height="9" rx="1" fill="#a9aaac" stroke="#8d8d8f" />
              <path d="M2.500 2.500L5 5 2.500 7.500M5.500 8h3.500" stroke="#3c3c3c" fill="none" />
            </svg>
            <Caret w={3} color="#555" />
          </PromptGlyph>
          <Prompt />
        </CommandField>
      </CommandBar>
    </Canvas>
    <StatusBar $h={21}>
      <StatusCell $w={92} $pad={8}>12.3684, 17.8379, 0.0000</StatusCell>
    </StatusBar>
    <CanvasEdge $h={2} $seg />
  </Column>
);

export default function App() {
  return (
    <>
      <GlobalStyle />
      <Screen>
        <LeftWindow />
        <RightWindow />
        <Headline>
          <HeadlineRow $track={-0.28}>GREEN AND BLUE SELECTION</HeadlineRow>
          <HeadlineRow $track={-0.2}>N AUTOCAD</HeadlineRow>
        </Headline>
      </Screen>
    </>
  );
}
